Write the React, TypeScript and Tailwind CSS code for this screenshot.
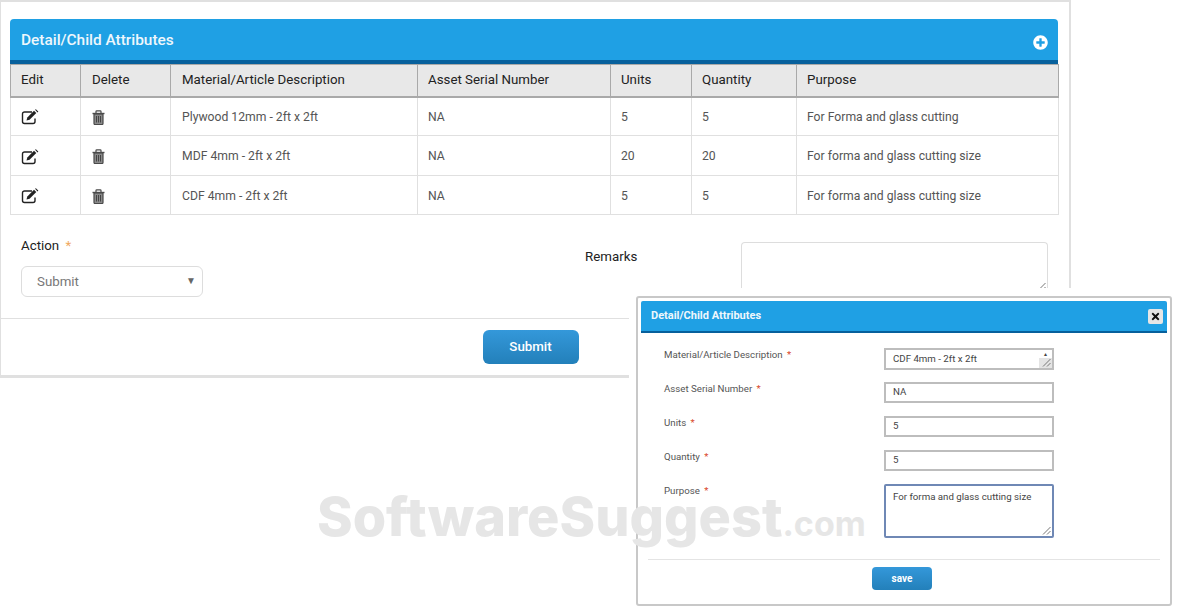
import { FaPlusCircle, FaTimes } from "react-icons/fa";

const rows = [
  { name: "Plywood 12mm - 2ft x 2ft", serial: "NA", units: "5", qty: "5", purpose: "For Forma and glass cutting", height: "h-[39px]" },
  { name: "MDF 4mm - 2ft x 2ft", serial: "NA", units: "20", qty: "20", purpose: "For forma and glass cutting size", height: "h-[40px]" },
  { name: "CDF 4mm - 2ft x 2ft", serial: "NA", units: "5", qty: "5", purpose: "For forma and glass cutting size", height: "h-[39px]" },
];

const headers = [
  { label: "Edit", width: "w-[70px]" },
  { label: "Delete", width: "w-[90px]" },
  { label: "Material/Article Description", width: "w-[247px]" },
  { label: "Asset Serial Number", width: "w-[193px]" },
  { label: "Units", width: "w-[81px]" },
  { label: "Quantity", width: "w-[105px]" },
  { label: "Purpose", width: "w-[262px]" },
];

function EditIcon() {
  return (
    <svg width="18" height="16" viewBox="0 0 18 16" className="block">
      <path d="M11 3H3.5A2 2 0 0 0 1.5 5v7.5a2 2 0 0 0 2 2H12a2 2 0 0 0 2-2V9.5" fill="none" stroke="#222" strokeWidth="1.4" />
      <path d="M5.5 11.5l.8-3L13 1.8l2.3 2.3-6.7 6.7z" fill="#222" />
      <path d="M14 .8l.9-.6 2.4 2.4-.7.8z" fill="#222" />
    </svg>
  );
}

function TrashIcon() {
  return (
    <svg width="13" height="15" viewBox="0 0 13 15" className="block">
      <path d="M2 4h9v9.5a1 1 0 0 1-1 1H3a1 1 0 0 1-1-1z" fill="#8a8a8a" stroke="#4a4a4a" strokeWidth="1.2" />
      <path d="M4.5 6v6.5M6.5 6v6.5M8.5 6v6.5" stroke="#444" strokeWidth="1" />
      <path d="M.5 3.5h12" stroke="#4a4a4a" strokeWidth="1.4" />
      <path d="M4 3V1.6a.8.8 0 0 1 .8-.8h3.4a.8.8 0 0 1 .8.8V3" fill="none" stroke="#4a4a4a" strokeWidth="1.2" />
    </svg>
  );
}

function ResizeHandle() {
  return (
    <svg width="9" height="9" viewBox="0 0 9 9" className="absolute right-[1px] bottom-[1px]">
      <path d="M1 8.5L8.5 1M5 8.5L8.5 5" stroke="#777" strokeWidth="1" />
    </svg>
  );
}

function ModalRow({ label, value, rowClass }: { label: string; value: string; rowClass: string }) {
  return (
    <div className={`flex ${rowClass}`}>
      <div className="w-[220px] pt-[1px] text-[9.7px] leading-[12px] text-[#555]">
        {label} <span className="ml-[2px] text-[#d9472b]">*</span>
      </div>
      <div className="flex h-[21px] w-[170px] items-center border-2 border-[#bdbdbd] pl-[7px] text-[9.7px] text-[#444]">
        {value}
      </div>
    </div>
  );
}

export default function App() {
  return (
    <div className="relative h-[614px] w-[1180px] overflow-hidden bg-white font-['Roboto',sans-serif]">
      <div className="h-[378px] w-[1071px] border-t-2 border-r-2 border-b-[3px] border-l border-[#e0e0e0] pt-[17px]">
        <div className="ml-[9px] w-[1048px]">
          <div className="flex h-[45px] items-start justify-between rounded-t-[4px] border-b-4 border-[#07609c] bg-[#1fa0e4] pr-[10px] pl-[11px]">
            <span className="mt-[12px] text-[15.4px] leading-[19px] font-medium text-[#eef7fc]">Detail/Child Attributes</span>
            <FaPlusCircle className="mt-[16px] text-[15px] text-white" />
          </div>
          <table className="w-[1048px] table-fixed border-collapse text-[12.2px]">
            <thead>
              <tr className="h-[32px] bg-[#e8e8e8]">
                {headers.map((h, i) => (
                  <th
                    key={h.label}
                    className={`${h.width} ${i === 1 || i === 2 ? "pl-[11px]" : "pl-[10px]"} border border-b-2 border-[#a9a9a9] text-left text-[13.3px] font-normal text-[#222]`}
                  >
                    {h.label}
                  </th>
                ))}
              </tr>
            </thead>
            <tbody className="text-[#555]">
              {rows.map((r) => (
                <tr key={r.name} className={r.height}>
                  <td className="border border-[#e0e0e0] pt-[2px] pl-[10px]">
                    <EditIcon />
                  </td>
                  <td className="border border-[#e0e0e0] pt-[2px] pl-[11px]">
                    <TrashIcon />
                  </td>
                  <td className="border border-[#e0e0e0] pt-[2px] pl-[11px]">{r.name}</td>
                  <td className="border border-[#e0e0e0] pt-[2px] pl-[10px]">{r.serial}</td>
                  <td className="border border-[#e0e0e0] pt-[2px] pl-[10px]">{r.units}</td>
                  <td className="border border-[#e0e0e0] pt-[2px] pl-[10px]">{r.qty}</td>
                  <td className="border border-[#e0e0e0] pt-[2px] pl-[10px]">{r.purpose}</td>
                </tr>
              ))}
            </tbody>
          </table>
        </div>

        <div className="flex h-[103px] pl-[20px]">
          <div className="w-[564px] pt-[22px]">
            <div className="text-[13.3px] leading-[17px] text-[#222]">
              Action <span className="ml-[3px] text-[#f0a860]">*</span>
            </div>
            <div className="relative mt-[12px] flex h-[31px] w-[182px] items-center rounded-[6px] border border-[#ddd] pl-[15px] text-[13.3px] text-[#777]">
              Submit
              <span className="absolute top-[6px] right-[6px] text-[10px] text-[#666]">▼</span>
            </div>
          </div>
          <div className="w-[156px] pt-[33px] text-[13.3px] leading-[17px] text-[#222]">Remarks</div>
          <div className="relative mt-[27px] h-[50px] w-[307px] rounded-t-[4px] border border-b-0 border-[#ddd]">
            <ResizeHandle />
          </div>
        </div>

        <div className="flex h-[57px] justify-center border-t border-[#e0e0e0] pt-[11px] pr-[9px]">
          <button className="h-[34px] w-[96px] rounded-[6px] bg-gradient-to-b from-[#3498da] to-[#2380ba] text-[13.3px] font-medium text-white">
            Submit
          </button>
        </div>
      </div>

      {/* modal screenshot pasted over the page, with its white margin */}
      <div className="absolute top-[288px] left-[629px] h-[326px] w-[551px] bg-white pt-[8px] pl-[7px]">
        <div className="h-[310px] w-[536px] rounded-[3px] border-2 border-[#c8c8c8] px-[3px] pt-[3px]">
          <div className="flex h-[32px] items-center justify-between rounded-t-[2px] border-b-[2px] border-[#07609c] bg-[#1fa0e4] pr-[4px] pl-[10px]">
            <span className="text-[11px] font-bold text-[#eef7fc]">Detail/Child Attributes</span>
            <span className="flex h-[15px] w-[15px] items-center justify-center rounded-[2px] bg-[#e6e6e6]">
              <FaTimes className="text-[11px] text-[#111]" />
            </span>
          </div>
          <div className="pt-[15px] pl-[23px]">
            <div className="flex">
              <div className="w-[220px] pt-[1px] text-[9.7px] leading-[12px] text-[#555]">
                Material/Article Description <span className="ml-[2px] text-[#d9472b]">*</span>
              </div>
              <div className="relative flex h-[22px] w-[170px] items-center border-2 border-[#bdbdbd] pl-[7px] text-[9.7px] text-[#444]">
                CDF 4mm - 2ft x 2ft
                <span className="absolute top-0 right-0 flex h-full w-[13px] flex-col items-center bg-[#e4e4e4] text-[6px] leading-[7px] text-[#444]">
                  <span className="h-[8px] w-full bg-white text-center">▴</span>
                </span>
                <ResizeHandle />
              </div>
            </div>
            <ModalRow label="Asset Serial Number" value="NA" rowClass="mt-[12px]" />
            <ModalRow label="Units" value="5" rowClass="mt-[13px]" />
            <ModalRow label="Quantity" value="5" rowClass="mt-[13px]" />
            <div className="mt-[13px] flex">
              <div className="w-[220px] pt-[1px] text-[9.7px] leading-[12px] text-[#555]">
                Purpose <span className="ml-[2px] text-[#d9472b]">*</span>
              </div>
              <div className="relative h-[54px] w-[170px] rounded-[2px] border-2 border-[#6f88b5] pt-[5px] pl-[7px] text-[9.7px] leading-[12px] text-[#444]">
                For forma and glass cutting size
                <ResizeHandle />
              </div>
            </div>
          </div>
          <div className="mx-[7px] mt-[21px] flex justify-center border-t border-[#e4e4e4] pt-[7px] pr-[4px]">
            <button className="h-[23px] w-[60px] rounded-[4px] bg-gradient-to-b from-[#3498da] to-[#2380ba] text-[10px] font-bold text-white">
              save
            </button>
          </div>
        </div>
      </div>

      {/* watermark */}
      <div className="pointer-events-none absolute top-[497px] left-[317px] flex items-baseline font-['Inter',sans-serif] font-extrabold text-[#e6e6e6]">
        <span className="text-[54px] leading-[40px]">SoftwareSuggest</span>
        <span className="text-[34px] leading-[40px] font-bold">.com</span>
      </div>
    </div>
  );
}
